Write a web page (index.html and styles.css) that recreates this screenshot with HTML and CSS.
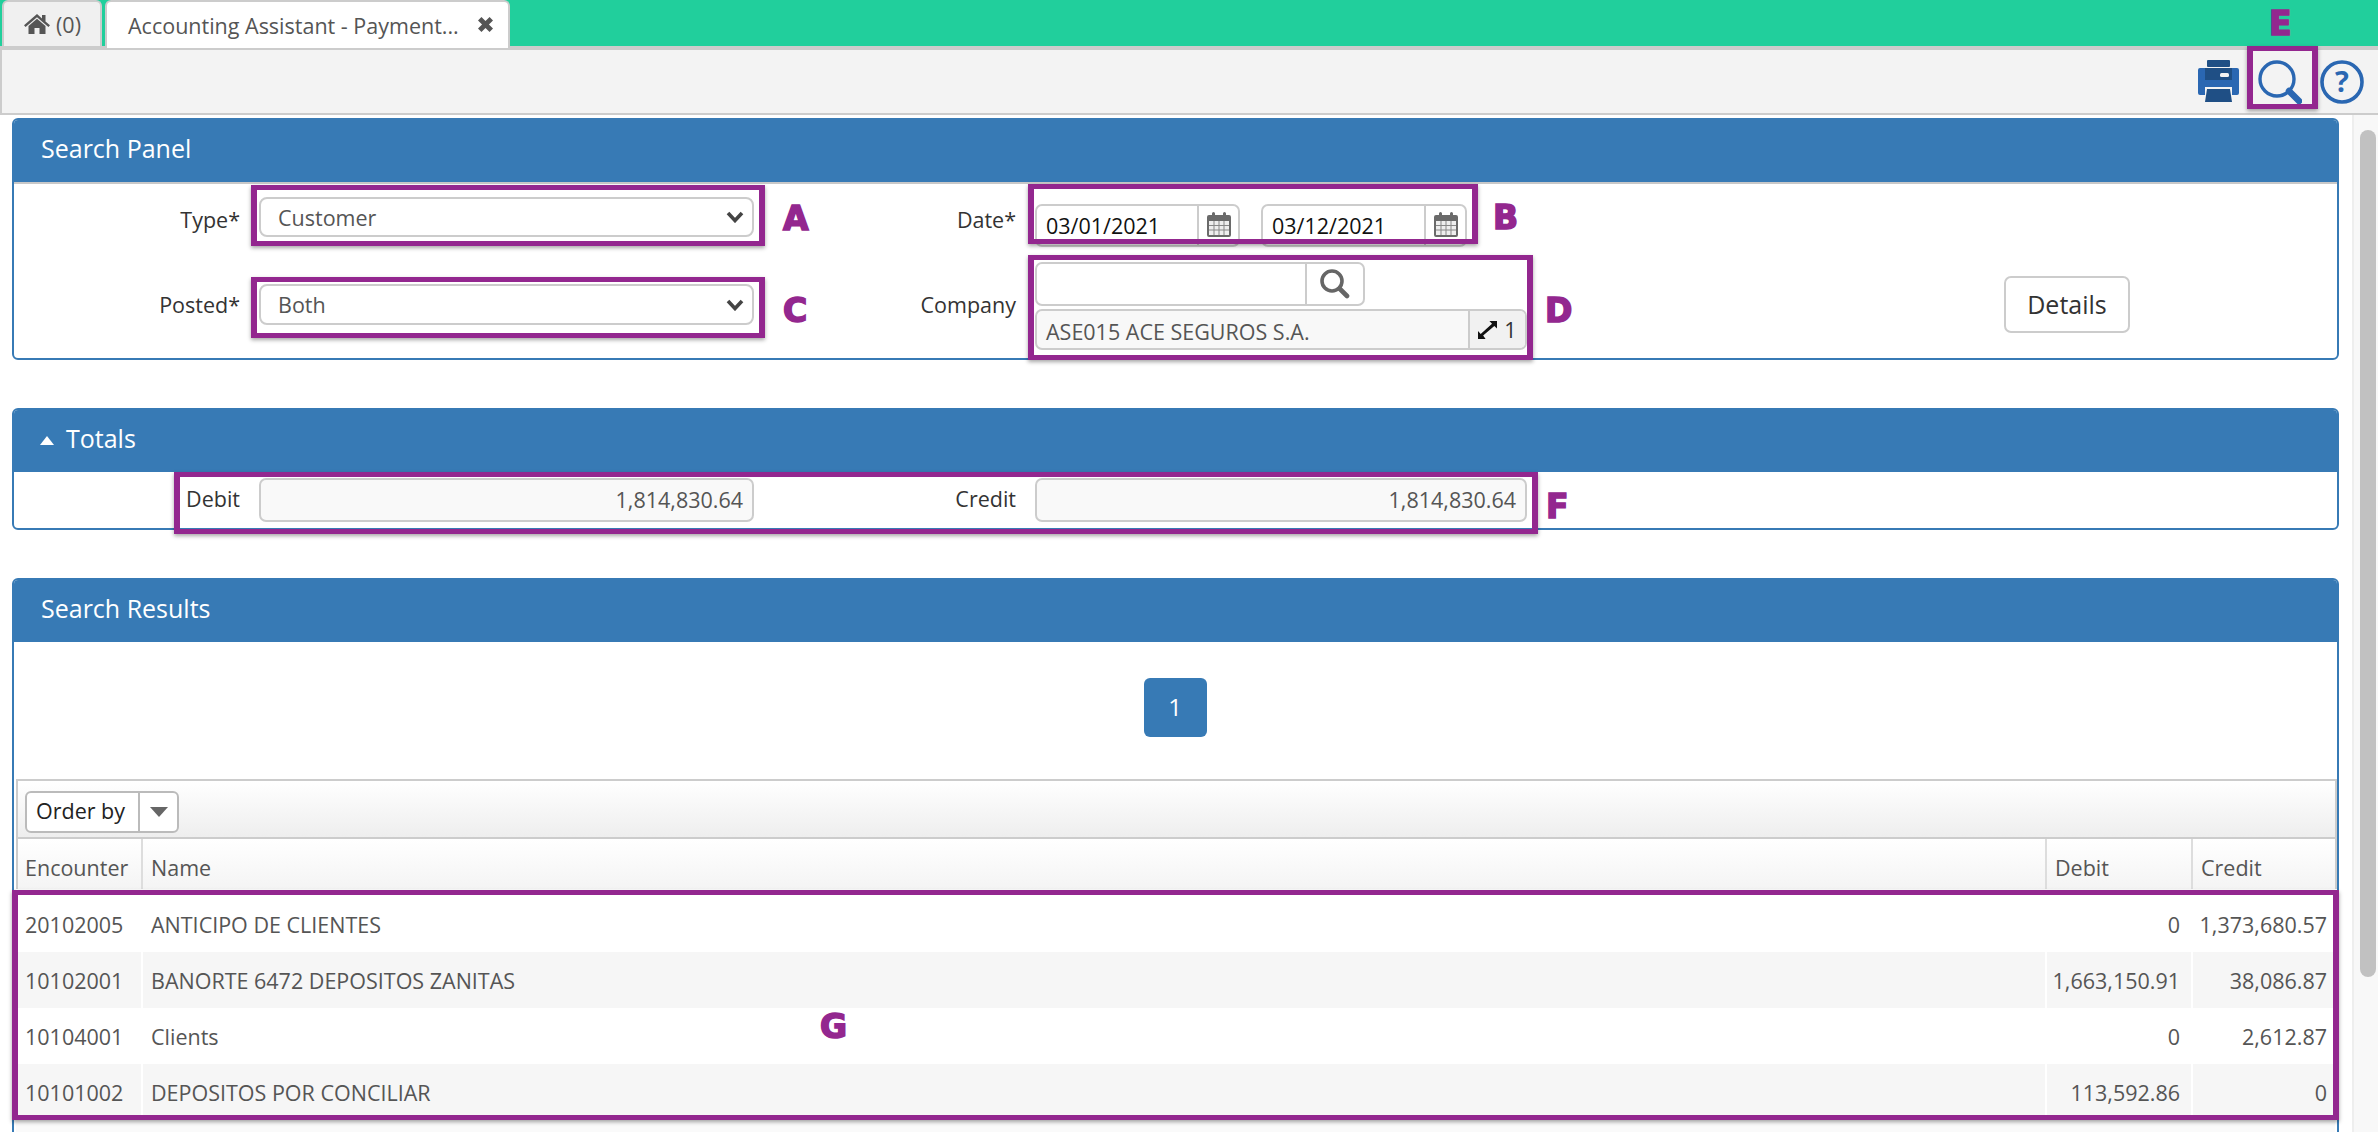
FILE: index.html
```html
<!DOCTYPE html>
<html lang="en">
<head>
<meta charset="utf-8">
<title>Accounting Assistant - Payments</title>
<link rel="stylesheet" href="styles.css">
</head>
<body>
<header class="tabs">
  <div class="tab tab-home">
    <svg class="home-icon" viewBox="0 0 26 20"><path d="M13 0 L18 4.4 V1 H21.5 V7.5 L26 11.3 L24.4 13 L13 3.2 L1.6 13 L0 11.3 Z M4.5 12 L13 4.8 L21.5 12 V20 H15.5 V14 H10.5 V20 H4.5 Z"/></svg>
    <span>(0)</span>
  </div>
  <div class="tab tab-active">
    <span class="tab-title">Accounting Assistant - Payment...</span>
    <svg class="close-icon" viewBox="0 0 14 14"><path d="M0 3.2 L3.2 0 L7 3.8 L10.8 0 L14 3.2 L10.2 7 L14 10.8 L10.8 14 L7 10.2 L3.2 14 L0 10.8 L3.8 7 Z"/></svg>
  </div>
</header>

<div class="toolbar">
  <svg class="tool tool-print" viewBox="0 0 41 42">
    <rect x="9" y="0" width="23" height="7" rx="1" fill="#1f4f85"/>
    <path d="M2 8 H39 a2 2 0 0 1 2 2 V33 a2 2 0 0 1 -2 2 H34 V27 H7 V35 H2 a2 2 0 0 1 -2 -2 V10 a2 2 0 0 1 2 -2 Z" fill="#2a67b2"/>
    <rect x="7" y="8" width="27" height="12" fill="#1f4f85"/>
    <rect x="22" y="13" width="9" height="4" rx="1.5" fill="#f3f3f3"/>
    <path d="M9 29 H32 L34 42 H7 Z" fill="#1f4f85"/>
  </svg>
  <svg class="tool tool-search" viewBox="0 0 44 44">
    <circle cx="19" cy="19" r="17" fill="none" stroke="#2a67b2" stroke-width="3.4"/>
    <path d="M31 31 L41 41" stroke="#2a67b2" stroke-width="6.5" stroke-linecap="round"/>
  </svg>
  <svg class="tool tool-help" viewBox="0 0 44 44">
    <circle cx="22" cy="22" r="20" fill="none" stroke="#2a67b2" stroke-width="3.6"/>
    <text x="22" y="32" text-anchor="middle" class="help-mark">?</text>
  </svg>
</div>

<div class="page">
  <main class="content">
    <section class="panel panel-search">
      <h2 class="panel-head head-rule">Search Panel</h2>
      <div class="form-grid">
        <div class="label l1">Type*</div>
        <div class="select s1"><span>Customer</span><svg class="chev" viewBox="0 0 18 12"><path d="M2 2 L9 9.5 L16 2" /></svg></div>
        <div class="label l1">Date*</div>
        <div class="dates">
          <div class="group date">
            <span class="date-text">03/01/2021</span>
            <span class="addon"><svg class="cal" viewBox="0 0 24 25"><use href="#calendar"/></svg></span>
          </div>
          <div class="group date">
            <span class="date-text">03/12/2021</span>
            <span class="addon"><svg class="cal" viewBox="0 0 24 25"><use href="#calendar"/></svg></span>
          </div>
        </div>
        <div></div>
        <div></div>

        <div class="label l2">Posted*</div>
        <div class="select s2"><span>Both</span><svg class="chev" viewBox="0 0 18 12"><path d="M2 2 L9 9.5 L16 2" /></svg></div>
        <div class="label l2">Company</div>
        <div class="company">
          <div class="group company-search">
            <span class="fill"></span>
            <span class="addon addon-search">
              <svg class="mag" viewBox="0 0 30 30"><circle cx="12" cy="12" r="10" fill="none" stroke="#666" stroke-width="3.6"/><path d="M19.5 19.5 L27 27" stroke="#666" stroke-width="4.6" stroke-linecap="round"/></svg>
            </span>
          </div>
          <div class="group company-value">
            <span class="fill value-text">ASE015 ACE SEGUROS S.A.</span>
            <span class="addon addon-count">
              <svg class="expand" viewBox="0 0 20 19"><path d="M12 0 H20 V8 L17.2 5.2 L5.4 15.4 L8 19 H0 V10.6 L2.8 13.6 L14.8 2.8 Z"/></svg>
              <span>1</span>
            </span>
          </div>
        </div>
        <div></div>
        <button class="btn-details" type="button">Details</button>
      </div>
    </section>

    <section class="panel panel-totals">
      <h2 class="panel-head"><span class="caret-up"></span>Totals</h2>
      <div class="totals-grid">
        <div class="label">Debit</div>
        <div class="readonly">1,814,830.64</div>
        <div class="label">Credit</div>
        <div class="readonly">1,814,830.64</div>
      </div>
    </section>

    <section class="panel panel-results">
      <h2 class="panel-head">Search Results</h2>
      <div class="pager"><span class="page-btn">1</span></div>
      <div class="grid-wrap">
        <div class="grid-tools">
          <div class="order-by"><span class="order-text">Order by</span><span class="order-drop"><span class="caret-down"></span></span></div>
        </div>
        <table class="grid">
          <colgroup><col class="c-enc"><col><col class="c-debit"><col class="c-credit"></colgroup>
          <thead>
            <tr><th>Encounter</th><th>Name</th><th>Debit</th><th>Credit</th></tr>
          </thead>
          <tbody>
            <tr class="first"><td>20102005</td><td>ANTICIPO DE CLIENTES</td><td class="num">0</td><td class="num">1,373,680.57</td></tr>
            <tr><td>10102001</td><td>BANORTE 6472 DEPOSITOS ZANITAS</td><td class="num">1,663,150.91</td><td class="num">38,086.87</td></tr>
            <tr><td>10104001</td><td>Clients</td><td class="num">0</td><td class="num">2,612.87</td></tr>
            <tr><td>10101002</td><td>DEPOSITOS POR CONCILIAR</td><td class="num">113,592.86</td><td class="num">0</td></tr>
            <tr class="tail"><td colspan="4"></td></tr>
          </tbody>
        </table>
      </div>
    </section>
  </main>
  <aside class="scrollbar"><div class="thumb"></div></aside>
</div>

<svg class="defs" width="0" height="0">
  <symbol id="calendar" viewBox="0 0 24 25">
    <path d="M2 3 H5 V1.5 a1.5 1.5 0 0 1 3 0 V3 H16 V1.5 a1.5 1.5 0 0 1 3 0 V3 H22 a2 2 0 0 1 2 2 V23 a2 2 0 0 1 -2 2 H2 a2 2 0 0 1 -2 -2 V5 a2 2 0 0 1 2 -2 Z" fill="#6a6a6a"/>
    <path d="M2 9 H22 V23 H2 Z" fill="#eee"/>
    <path d="M7 9 V23 M12 9 V23 M17 9 V23 M2 13.5 H22 M2 18 H22" stroke="#888" stroke-width="1"/>
  </symbol>
</svg>

<div class="mark box-a"></div><div class="tag tag-a">A</div>
<div class="mark box-b"></div><div class="tag tag-b">B</div>
<div class="mark box-c"></div><div class="tag tag-c">C</div>
<div class="mark box-d"></div><div class="tag tag-d">D</div>
<div class="mark box-e"></div><div class="tag tag-e">E</div>
<div class="mark box-f"></div><div class="tag tag-f">F</div>
<div class="mark box-g"></div><div class="tag tag-g">G</div>
</body>
</html>
```

FILE: styles.css
```css
* { box-sizing: border-box; }
html, body { margin: 0; padding: 0; height: 100%; }
body {
  position: relative;
  height: 1132px;
  overflow: hidden;
  font-family: "Open Sans", "Noto Sans", sans-serif;
  font-size: 21.5px;
  color: #333;
  background: #fff;
}
.defs { position: absolute; }

/* tabs */
.tabs {
  height: 46px;
  background: #21cf9c;
  display: flex;
  align-items: flex-start;
  padding-left: 2px;
  gap: 3px;
  position: relative;
  z-index: 1;
}
.tab {
  display: flex;
  align-items: center;
  border: 2px solid #ccc;
  border-bottom: 0;
  border-radius: 6px 6px 0 0;
}
.tab-home {
  width: 100px;
  height: 46px;
  padding-left: 20px;
  background: #f0f0f0;
  color: #555;
  gap: 6px;
}
.home-icon { width: 26px; height: 20px; fill: #555; }
.tab-active {
  width: 405px;
  height: 48px;
  padding-left: 21px;
  background: #fff;
  border-color: #ccc;
  color: #555;
}
.tab-title { width: 350px; font-size: 21.5px; white-space: nowrap; }
.close-icon { width: 15px; height: 15px; fill: #555; margin-bottom: 2px; }

/* toolbar */
.toolbar {
  height: 69px;
  background: #f3f3f3;
  border-top: 4px solid #ccc;
  border-left: 2px solid #ccc;
  border-bottom: 2px solid #ccc;
  display: flex;
  justify-content: flex-end;
  align-items: flex-start;
  padding: 10px 14px 0 0;
}
.tool { display: block; }
.tool-print { width: 41px; height: 42px; margin-right: 19px; }
.tool-search { width: 44px; height: 44px; margin-right: 18px; }
.tool-help { width: 44px; height: 44px; }
.help-mark { font: 700 29px "Open Sans", sans-serif; fill: #2a67b2; }

/* page */
.page { display: flex; height: 1017px; }
.content {
  width: 2352px;
  padding: 3px 13px 0 12px;
  overflow: hidden;
}
.scrollbar {
  width: 26px;
  background: #f8f8f8;
  border-left: 2px solid #eee;
  padding: 15px 2px 0 6px;
}
.thumb { height: 847px; background: #c1c1c1; border-radius: 8px; }

/* panels */
.panel {
  border: 2px solid #377ab5;
  border-radius: 6px;
  background: #fff;
  margin-bottom: 48px;
  overflow: hidden;
}
.panel-head {
  margin: 0;
  height: 62px;
  padding: 0 0 7px 27px;
  background: #377ab5;
  color: #fff;
  font-size: 25px;
  font-weight: 400;
  display: flex;
  align-items: center;
}
.head-rule { height: 64px; border-bottom: 2px solid #c8c8c8; }
.panel-search { height: 242px; }
.panel-totals { height: 122px; }
.caret-up {
  width: 0;
  height: 0;
  border-left: 7px solid transparent;
  border-right: 7px solid transparent;
  border-bottom: 9px solid #fff;
  margin: 5px 12px 0 -1px;
}

/* forms */
.form-grid {
  display: grid;
  grid-template-columns: 245px 495px 281px 492px 477px 126px;
  grid-template-rows: 66px 108px;
  align-items: start;
}
.label {
  text-align: right;
  padding-right: 19px;
  line-height: 30px;
  color: #333;
}
.l1 { margin-top: 21px; }
.l2 { margin-top: 40px; }
.select {
  height: 40px;
  border: 2px solid #ccc;
  border-radius: 8px;
  padding: 0 8px 0 17px;
  display: flex;
  align-items: center;
  justify-content: space-between;
  color: #555;
}
.s1 { margin-top: 13px; }
.s2 { margin-top: 34px; height: 41px; }
.chev { width: 18px; height: 12px; fill: none; stroke: #444; stroke-width: 3.6; }
.group {
  display: flex;
  border: 2px solid #ccc;
  border-radius: 7px;
  overflow: hidden;
}
.addon {
  display: flex;
  align-items: center;
  justify-content: center;
  border-left: 2px solid #ccc;
}
.dates { display: flex; gap: 21px; margin-top: 20px; }
.date { height: 43px; width: 205px; align-items: stretch; }
.dates .date:last-child { width: 206px; }
.date-text { flex: 1; color: #111; padding: 3px 0 0 9px; line-height: 34px; }
.date .addon { width: 41px; padding-bottom: 2px; }
.cal { width: 24px; height: 25px; }
.company { margin-top: 12px; display: flex; flex-direction: column; gap: 3px; }
.company-search { width: 330px; height: 44px; }
.fill { flex: 1; }
.addon-search { width: 58px; }
.mag { width: 30px; height: 30px; }
.company-value { height: 41px; background: #f8f8f8; }
.value-text { color: #555; padding-left: 9px; line-height: 37px; padding-top: 2px; }
.addon-count { width: 57px; gap: 7px; background: #f1f1f1; color: #333; }
.expand { width: 19px; height: 18px; fill: #111; }
.btn-details {
  margin-top: 26px;
  height: 57px;
  width: 126px;
  background: #fff;
  border: 2px solid #ccc;
  border-radius: 7px;
  font: 400 25px "Open Sans", sans-serif;
  color: #333;
  padding: 0 0 2px;
}

.totals-grid {
  display: grid;
  grid-template-columns: 245px 495px 281px 492px;
  padding-top: 6px;
}
.totals-grid .label { line-height: 42px; }
.readonly {
  height: 44px;
  line-height: 40px;
  border: 2px solid #ccc;
  border-radius: 7px;
  background: #f9f9f9;
  text-align: right;
  padding-right: 9px;
  color: #555;
}

/* results */
.pager { padding: 36px 0 42px; display: flex; justify-content: center; }
.page-btn {
  width: 63px;
  height: 59px;
  line-height: 57px;
  text-align: center;
  background: #377ab5;
  color: #fff;
  border-radius: 6px;
  font-size: 24px;
  margin-left: -1px;
}
.grid-wrap { margin-left: 2px; }
.grid-tools {
  height: 60px;
  border: 2px solid #ccc;
  background: linear-gradient(#fff, #eee);
  padding: 10px 0 0 7px;
}
.order-by {
  display: flex;
  width: 154px;
  height: 42px;
  background: #fff;
  border: 2px solid #bbb;
  border-radius: 6px;
  color: #222;
}
.order-text { width: 111px; padding-left: 9px; line-height: 35px; }
.order-drop {
  flex: 1;
  border-left: 2px solid #bbb;
  display: flex;
  align-items: center;
  justify-content: center;
}
.caret-down {
  border-left: 9px solid transparent;
  border-right: 9px solid transparent;
  border-top: 10px solid #666;
}
.grid {
  width: 100%;
  table-layout: fixed;
  border-collapse: separate;
  border-spacing: 0;
}
.c-enc { width: 127px; }
.c-debit { width: 146px; }
.c-credit { width: 144px; }
.grid th {
  height: 50px;
  text-align: left;
  font-weight: 400;
  color: #555;
  padding: 7px 0 0 8px;
  background: linear-gradient(#fff, #f4f4f4);
  border-right: 2px solid #ddd;
}
.grid th:first-child { border-left: 2px solid #ccc; padding-left: 7px; }
.grid th:last-child { border-right: 2px solid #ccc; padding-left: 8px; }
.grid td {
  height: 56px;
  padding: 0 11px 0 8px;
  color: #555;
  border-right: 2px solid #fff;
  white-space: nowrap;
}
.grid td:first-child { padding-left: 9px; }
.grid td.num { padding-left: 0; text-align: right; }
.grid td.num:last-child { padding-right: 8px; }
.grid tbody tr:nth-child(even) td { background: #f6f6f6; }
.grid tr.first td { height: 63px; padding-top: 7px; }
.grid tr.tail td { background: #fafafa; }

/* annotations laid over the screenshot */
.mark {
  position: absolute;
  border: 5px solid #93278f;
  border-left-width: 6px;
  border-right-width: 6px;
  box-shadow: 0 2px 4px rgba(0, 0, 0, .35);
  z-index: 5;
}
.box-a { left: 251px; top: 185px; width: 514px; height: 61px; }
.box-b { left: 1028px; top: 184px; width: 450px; height: 60px; }
.box-c { left: 251px; top: 277px; width: 514px; height: 61px; }
.box-d { left: 1028px; top: 255px; width: 505px; height: 105px; }
.box-e { left: 2247px; top: 46px; width: 71px; height: 63px; }
.box-f { left: 174px; top: 472px; width: 1364px; height: 62px; }
.box-g { left: 12px; top: 890px; width: 2327px; height: 230px; }
.tag {
  position: absolute;
  z-index: 6;
  font: 700 33px/33px "DejaVu Sans", sans-serif;
  color: #93278f;
  -webkit-text-stroke: 1.6px #93278f;
}
.tag-a { left: 783px; top: 202px; }
.tag-b { left: 1493px; top: 201px; }
.tag-c { left: 783px; top: 294px; }
.tag-d { left: 1545px; top: 294px; }
.tag-e { left: 2269px; top: 7px; }
.tag-f { left: 1546px; top: 490px; }
.tag-g { left: 820px; top: 1010px; }
```
